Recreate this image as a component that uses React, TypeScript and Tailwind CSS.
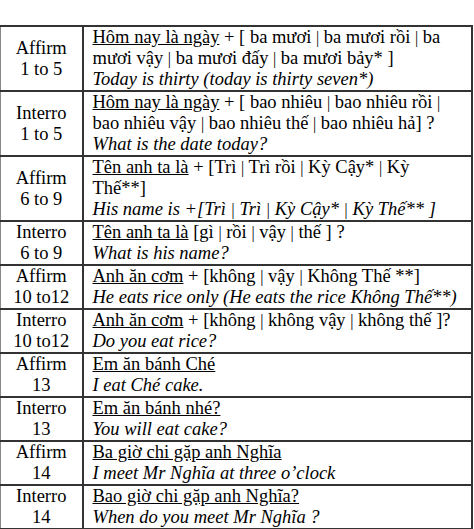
const B = <span className="text-[16px] leading-none">|</span>;

const rows = [
  {
    label: ["Affirm", "1 to 5"],
    lines: [
      <><u>Hôm nay là ngày</u> + [ ba mươi {B} ba mươi rồi {B} ba</>,
      <>mươi vậy {B} ba mươi đấy {B} ba mươi bảy* ]</>,
      <i>Today is thirty (today is thirty seven*)</i>,
    ],
  },
  {
    label: ["Interro", "1 to 5"],
    lines: [
      <><u>Hôm nay là ngày</u> + [ bao nhiêu {B} bao nhiêu rồi {B}</>,
      <>bao nhiêu vậy {B} bao nhiêu thế {B} bao nhiêu hả] ?</>,
      <i>What is the date today?</i>,
    ],
  },
  {
    label: ["Affirm", "6 to 9"],
    lines: [
      <><u>Tên anh ta là</u> + [Trì {B} Trì rồi {B} Kỳ Cậy* {B} Kỳ</>,
      <>Thế**]</>,
      <i>His name is +[Trì {B} Trì {B} Kỳ Cậy* {B} Kỳ Thế** ]</i>,
    ],
  },
  {
    label: ["Interro", "6 to 9"],
    lines: [
      <><u>Tên anh ta là</u> [gì {B} rồi {B} vậy {B} thế ] ?</>,
      <i>What is his name?</i>,
    ],
  },
  {
    label: ["Affirm", "10 to12"],
    lines: [
      <><u>Anh ăn cơm</u> + [không {B} vậy {B} Không Thế **]</>,
      <i>He eats rice only (He eats the rice Không Thế**)</i>,
    ],
  },
  {
    label: ["Interro", "10 to12"],
    lines: [
      <><u>Anh ăn cơm</u> + [không {B} không vậy {B} không thế ]?</>,
      <i>Do you eat rice?</i>,
    ],
  },
  {
    label: ["Affirm", "13"],
    lines: [<u>Em ăn bánh Ché</u>, <i>I eat Ché cake.</i>],
  },
  {
    label: ["Interro", "13"],
    lines: [<u>Em ăn bánh nhé?</u>, <i>You will eat cake?</i>],
  },
  {
    label: ["Affirm", "14"],
    lines: [<u>Ba giờ chi gặp anh Nghĩa</u>, <i>I meet Mr Nghĩa at three o’clock</i>],
  },
  {
    label: ["Interro", "14"],
    lines: [<u>Bao giờ chi gặp anh Nghĩa?</u>, <i>When do you meet Mr Nghĩa ?</i>],
  },
];

export default function App() {
  return (
    <div className="w-[474px] h-[529px] bg-white pt-[25px] overflow-hidden font-['Liberation_Serif','Times_New_Roman',serif] text-[18.5px] leading-[21px] text-black">
      <table className="w-[473px] border-collapse">
        <tbody>
          {rows.map((row, i) => (
            <tr key={i}>
              <td className="w-[82px] border-2 border-l border-[#333] border-l-[#888] text-center align-middle whitespace-nowrap">
                {row.label.map((l, j) => (
                  <div key={j}>{l}</div>
                ))}
              </td>
              <td className="border-2 border-[#333] pl-[9px] align-top whitespace-nowrap">
                {row.lines.map((line, j) => (
                  <div key={j}>{line}</div>
                ))}
              </td>
            </tr>
          ))}
        </tbody>
      </table>
    </div>
  );
}
